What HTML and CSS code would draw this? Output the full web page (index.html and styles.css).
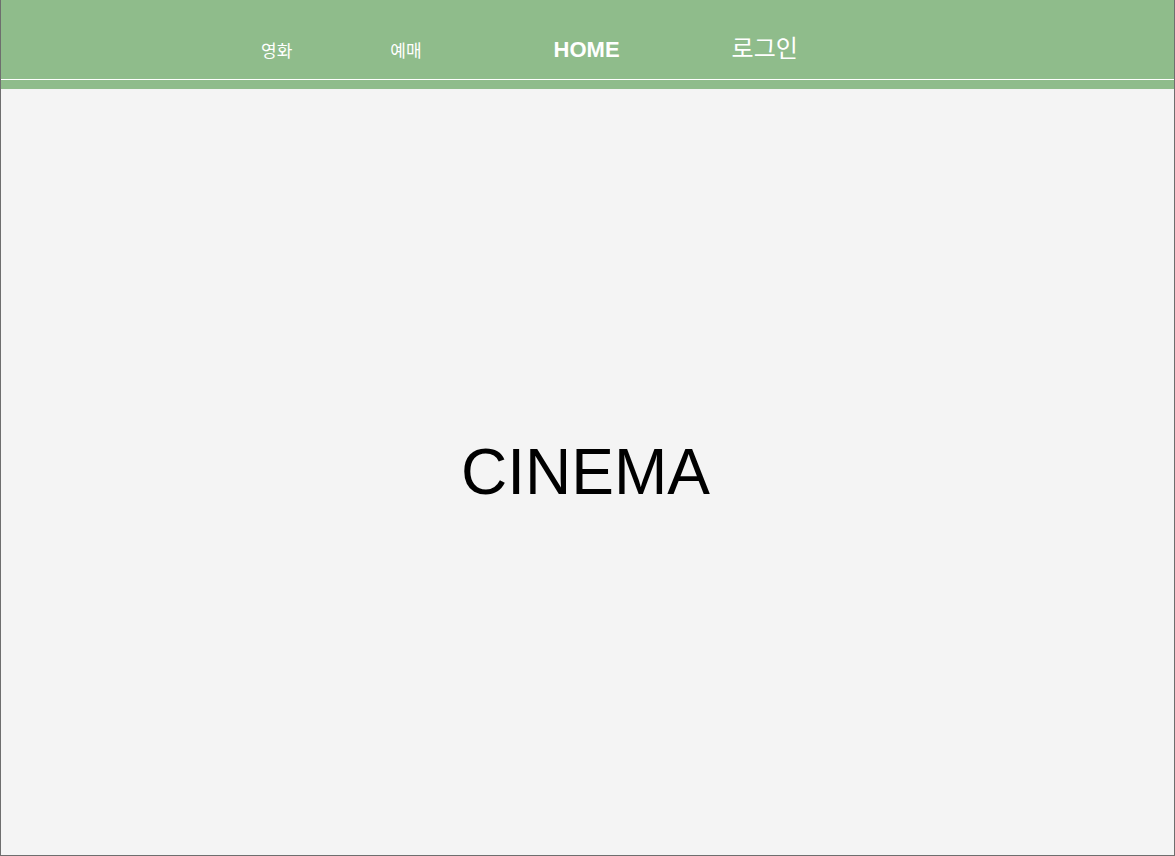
FILE: index.html
```html
<!DOCTYPE html>
<html lang="ko">
<head>
<meta charset="utf-8">
<title>CINEMA</title>
<link rel="stylesheet" href="styles.css">
</head>
<body>
<div class="frame">
  <header class="header">
    <nav class="nav">
      <a class="nav-item nav-movie" href="#">영화</a>
      <a class="nav-item nav-ticket" href="#">예매</a>
      <a class="nav-item nav-home" href="#">HOME</a>
      <a class="nav-item nav-login" href="#">로그인</a>
    </nav>
  </header>
  <main class="main">
    <h1 class="title">CINEMA</h1>
  </main>
</div>
</body>
</html>
```
FILE: styles.css
```css
html, body {
  margin: 0;
  padding: 0;
}
body {
  font-family: "Liberation Sans", "Noto Sans CJK KR", sans-serif;
  background: #f4f4f4;
}
.frame {
  width: 1175px;
  height: 856px;
  box-sizing: border-box;
  border-left: 1px solid #6e6e6e;
  border-right: 1px solid #6e6e6e;
  border-bottom: 1px solid #6e6e6e;
  display: flex;
  flex-direction: column;
  background: #f4f4f4;
}
.header {
  background: #8fbc8b;
  padding-bottom: 9px;
}
.nav {
  height: 80px;
  box-sizing: border-box;
  border-bottom: 1px solid #ffffff;
  display: flex;
  align-items: baseline;
  padding-top: 37px;
  padding-left: 260px;
}
.nav-item {
  color: #ffffff;
  text-decoration: none;
  line-height: 1;
}
.nav-movie {
  font-size: 17px;
  margin-right: 98px;
}
.nav-ticket {
  font-size: 17px;
  margin-right: 132px;
}
.nav-home {
  font-size: 22px;
  font-weight: bold;
  margin-right: 112px;
}
.nav-login {
  font-size: 24px;
}
.main {
  flex: 1;
  display: flex;
  align-items: center;
  justify-content: center;
}
.title {
  margin: 0;
  font-size: 64px;
  font-weight: normal;
  color: #000000;
  line-height: 1;
  padding-right: 4px;
}
```
